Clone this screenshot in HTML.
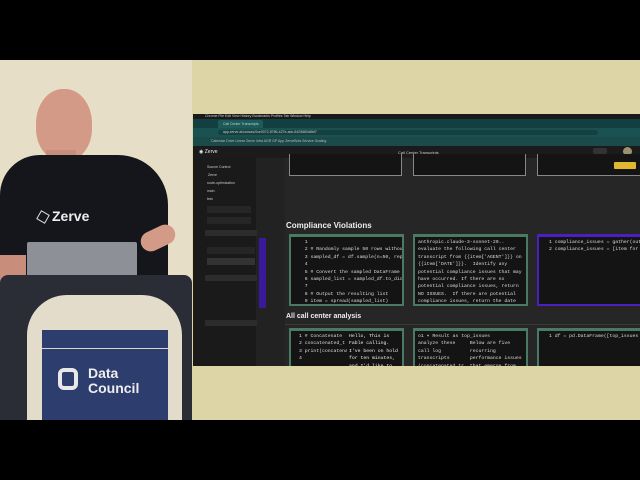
<!DOCTYPE html>
<html><head><style>
*{margin:0;padding:0;box-sizing:border-box}
body{width:640px;height:480px;background:#000;position:relative;overflow:hidden;font-family:"Liberation Sans",sans-serif}
.a{position:absolute}
.mono{font-family:"Liberation Mono",monospace;font-size:4.8px;line-height:7.4px;color:#ddd;white-space:pre}
.blk{position:absolute;background:#141414;border:2px solid #4a7a64;border-top-width:3px;overflow:hidden}
.sb{font-size:3.5px;color:#ccc}
</style></head><body>
<!-- stage -->
<div class="a" style="left:0;top:60px;width:640px;height:360px;background:#ddd5a6"></div>
<div class="a" style="left:0;top:60px;width:192px;height:360px;background:#e6dec6"></div>
<!-- presenter -->
<div class="a" style="left:36px;top:89px;width:56px;height:72px;border-radius:48% 48% 45% 45%;background:#d49a88"></div>
<div class="a" style="left:46px;top:150px;width:30px;height:14px;background:#c98d7c"></div>
<div class="a" style="left:0;top:155px;width:168px;height:130px;border-radius:40px 50px 0 0;background:#15161b"></div>
<div class="a" style="left:38px;top:212px;width:10px;height:10px;border:1.5px solid #ddd;transform:rotate(30deg)"></div>
<div class="a" style="left:52px;top:208px;color:#eee;font-weight:bold;font-size:14px">Zerve</div>
<div class="a" style="left:140px;top:228px;width:36px;height:20px;border-radius:10px;background:#d49a88;transform:rotate(-25deg)"></div>
<div class="a" style="left:0;top:255px;width:26px;height:30px;background:#c98d7c"></div>
<div class="a" style="left:27px;top:242px;width:110px;height:36px;background:#8d9096;border-radius:2px"></div>
<!-- podium -->
<div class="a" style="left:0;top:275px;width:192px;height:145px;background:#2a2d36;border-radius:8px 8px 0 0"></div>
<div class="a" style="left:27px;top:295px;width:155px;height:125px;background:#e4dccb;border-radius:40px 40px 0 0"></div>
<div class="a" style="left:42px;top:330px;width:126px;height:90px;background:#2c3d6e"></div>
<div class="a" style="left:42px;top:348px;width:126px;height:1px;background:#dcd6c8"></div>
<div class="a" style="left:58px;top:368px;width:20px;height:22px;border:4px solid #e8e8e8;border-radius:6px"></div>
<div class="a" style="left:88px;top:366px;color:#eee;font-size:14px;line-height:15px;font-weight:bold">Data<br>Council</div>
<!-- screen -->
<div class="a" style="left:193px;top:114px;width:447px;height:252px;background:#222;overflow:hidden">
 <div class="a" style="left:0;top:0;width:447px;height:5px;background:#1a1a1a"></div>
 <div class="a sb" style="left:12px;top:0">Chrome  File  Edit  View  History  Bookmarks  Profiles  Tab  Window  Help</div>
 <div class="a" style="left:0;top:5px;width:447px;height:9px;background:#124040"></div>
 <div class="a" style="left:25px;top:6px;width:45px;height:8px;background:#1d5a5a;border-radius:2px 2px 0 0"></div>
 <div class="a sb" style="left:30px;top:8px">Call Center Transcripts</div>
 <div class="a" style="left:0;top:14px;width:447px;height:9px;background:#1a5252"></div>
 <div class="a" style="left:25px;top:16px;width:380px;height:5px;background:#144040;border-radius:3px"></div>
 <div class="a sb" style="left:30px;top:16px">app.zerve.ai/canvas/0ce0072-8756-427e-adc-5425680d8bf7</div>
 <div class="a" style="left:0;top:23px;width:447px;height:9px;background:#1a4a4a"></div>
 <div class="a sb" style="left:18px;top:25px;color:#bbb">Calendar  Drive  Linear  Zerve Infra  AGR  GP  App  ZerveBots  Service Scaling</div>
 <div class="a" style="left:0;top:32px;width:447px;height:12px;background:#1b1b1b"></div>
 <div class="a" style="left:6px;top:35px;font-size:5px;color:#eee">◉ Zerve</div>
 <div class="a" style="left:205px;top:36px;font-size:4px;color:#ccc">Call Center Transcripts</div>
 <div class="a" style="left:400px;top:34px;width:14px;height:6px;background:#333;border-radius:2px"></div>
 <div class="a" style="left:430px;top:33px;width:9px;height:9px;background:#9b9070;border-radius:50%"></div>
 <!-- sidebar -->
 <div class="a" style="left:0;top:44px;width:63px;height:208px;background:#1a1a1a"></div>
 <div class="a sb" style="left:14px;top:49px;line-height:8px">Source Control<br>&nbsp;Zerve<br>route-optimization<br>main<br>test</div>
 <div class="a" style="left:14px;top:92px;width:44px;height:7px;background:#262626"></div>
 <div class="a" style="left:14px;top:103px;width:44px;height:7px;background:#262626"></div>
 <div class="a" style="left:12px;top:116px;width:52px;height:6px;background:#2c2c2c"></div>
 <div class="a" style="left:14px;top:133px;width:48px;height:7px;background:#252525"></div>
 <div class="a" style="left:14px;top:144px;width:48px;height:7px;background:#333"></div>
 <div class="a" style="left:12px;top:161px;width:52px;height:6px;background:#2c2c2c"></div>
 <div class="a" style="left:12px;top:206px;width:52px;height:6px;background:#2c2c2c"></div>
 <div class="a" style="left:66px;top:124px;width:7px;height:70px;background:#3a1a9a"></div>
 <!-- canvas -->
 <div class="a" style="left:92px;top:44px;width:355px;height:208px;background:#262626"></div>
 <div class="blk" style="left:96px;top:40px;width:113px;height:22px;border:1px solid #888;border-top:none"></div>
 <div class="blk" style="left:220px;top:40px;width:113px;height:22px;border:1px solid #888;border-top:none"></div>
 <div class="blk" style="left:344px;top:40px;width:110px;height:22px;border:1px solid #888;border-top:none"></div>
 <div class="a" style="left:421px;top:48px;width:22px;height:7px;background:#e0b830;border-radius:1px"></div>
 <div class="a" style="left:93px;top:107px;font-size:8px;font-weight:bold;color:#eee">Compliance Violations</div>
 <div class="blk" style="left:96px;top:120px;width:115px;height:72px"><div class="mono" style="padding:2px 0 0 8px">  1
  2 # Randomly sample 50 rows without
  3 sampled_df = df.sample(n=50, repla
  4
  5 # Convert the sampled DataFrame in
  6 sampled_list = sampled_df.to_dict(
  7
  8 # Output the resulting list
  9 item = spread(sampled_list)</div></div>
 <div class="blk" style="left:220px;top:120px;width:115px;height:72px"><div class="mono" style="padding:2px 0 0 3px">anthropic.claude-3-sonnet-20..
evaluate the following call center
transcript from {{item['AGENT']}} on
{{item['DATE']}}.  Identify any
potential compliance issues that may
have occurred. If there are no
potential compliance issues, return
NO ISSUES.  If there are potential
compliance issues, return the date</div></div>
 <div class="blk" style="left:344px;top:120px;width:110px;height:72px;border-color:#4a20c0"><div class="mono" style="padding:2px 0 0 10px">1 compliance_issues = gather(outp
2 compliance_issues = [item for i</div></div>
 <div class="a" style="left:93px;top:199px;font-size:7px;font-weight:bold;color:#eee">All call center analysis</div>
 <div class="a" style="left:92px;top:210px;width:355px;height:1px;background:#3a3a3a"></div>
 <div class="blk" style="left:96px;top:214px;width:115px;height:45px"><div class="mono" style="padding:2px 0 0 8px">1 # Concatenate
2 concatenated_t
3 print(concatena
4</div><div class="mono a" style="left:56px;top:2px;background:#141414;color:#eee;padding-left:2px">Hello, This is
Fable calling.
I've been on hold
for ten minutes,
and I'd like to
report an</div></div>
 <div class="blk" style="left:220px;top:214px;width:115px;height:45px"><div class="mono" style="padding:2px 0 0 3px">o1 ▾ Result as top_issues
analyze these     Below are five
call log          recurring
transcripts       performance issues
(concatenated_tr  that emerge from</div></div>
 <div class="blk" style="left:344px;top:214px;width:110px;height:45px"><div class="mono" style="padding:2px 0 0 10px">1 df = pd.DataFrame([top_issues</div></div>
</div>
</body></html>
